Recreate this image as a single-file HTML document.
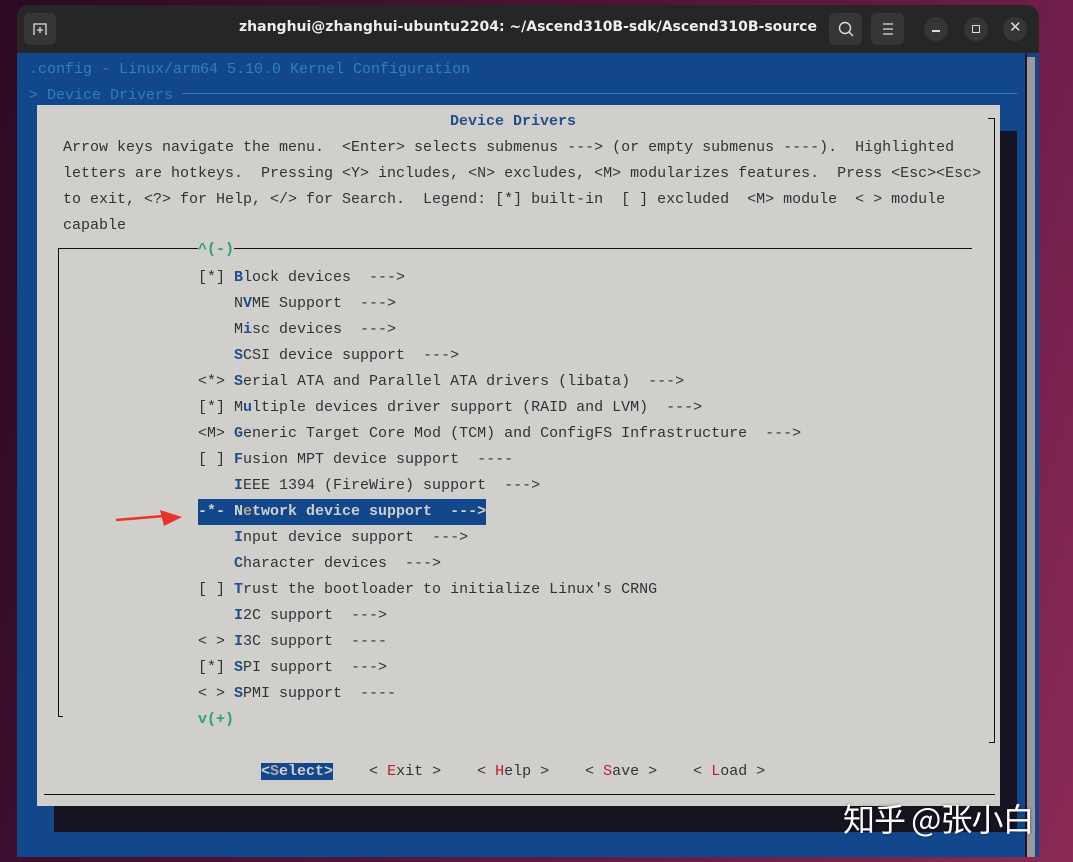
<!DOCTYPE html>
<html><head><meta charset="utf-8"><style>
*{margin:0;padding:0;box-sizing:border-box}
body{width:1073px;height:862px;overflow:hidden;position:relative;background:linear-gradient(110deg,#2c0a22 0%,#4a1236 40%,#6e1d4b 75%,#8a2a55 100%);font-family:"Liberation Mono",monospace;}
.abs{position:absolute}
.win{left:17px;top:5px;width:1022px;height:852px;background:#12488b;border-radius:12px 12px 0 0;overflow:hidden}
.tb{left:0;top:0;width:1022px;height:48px;background:#262626}
.t{position:absolute;font-size:15px;line-height:26px;white-space:pre;color:#2e3436}
.k{color:#1f4f8f;font-weight:bold}
.g{color:#2aa46a}
.r{color:#c01c28}
</style></head><body>
<div class="abs win">
 <div class="abs tb">
  <div class="abs" style="left:7px;top:8px;width:32px;height:32px;background:#363636;border-radius:6px;"></div>
  <svg class="abs" style="left:15px;top:16px" width="16" height="16" viewBox="0 0 16 16"><path d="M2 14V3h12v11" fill="none" stroke="#ddd" stroke-width="1.3"/><path d="M8 6v6M5 9h6" stroke="#ddd" stroke-width="1.3"/></svg>
  <div class="abs" style="left:0;width:1022px;top:14px;text-align:center;font-family:'DejaVu Sans','Liberation Sans',sans-serif;font-weight:bold;font-size:14px;color:#eee">zhanghui@zhanghui-ubuntu2204: ~/Ascend310B-sdk/Ascend310B-source</div>
  <div class="abs" style="left:812px;top:8px;width:33px;height:32px;background:#363636;border-radius:6px"></div>
  <svg class="abs" style="left:820px;top:15px" width="18" height="18" viewBox="0 0 18 18"><circle cx="8" cy="8" r="5.5" fill="none" stroke="#ddd" stroke-width="1.4"/><path d="M12 12l4 4" stroke="#ddd" stroke-width="1.4"/></svg>
  <div class="abs" style="left:854px;top:8px;width:33px;height:32px;background:#363636;border-radius:6px"></div>
  <svg class="abs" style="left:864px;top:17px" width="14" height="14" viewBox="0 0 14 14"><path d="M2 2h10M2 7h10M2 12h10" stroke="#ddd" stroke-width="1.3"/></svg>
  <div class="abs" style="left:907px;top:12px;width:24px;height:24px;background:#363636;border-radius:50%"></div>
  <div class="abs" style="left:915px;top:25px;width:8px;height:1.5px;background:#ddd"></div>
  <div class="abs" style="left:947px;top:12px;width:24px;height:24px;background:#363636;border-radius:50%"></div>
  <div class="abs" style="left:955px;top:20px;width:8px;height:8px;border:1.4px solid #ddd"></div>
  <div class="abs" style="left:986px;top:12px;width:24px;height:24px;background:#363636;border-radius:50%"></div>
  <div class="abs" style="left:992px;top:13px;color:#ddd;font-family:'DejaVu Sans',sans-serif;font-size:15px">✕</div>
 </div>
 <div class="abs" style="left:1010px;top:52px;width:8px;height:800px;background:#9a9a9a"></div>
 <div class="abs" style="left:1008px;top:48px;width:2px;height:804px;background:#2a1030"></div>
</div>
<div class="t" style="left:29px;top:57px;color:#2f7fc0">.config - Linux/arm64 5.10.0 Kernel Configuration</div>
<div class="t" style="left:29px;top:83px;color:#2f7fc0">&gt; Device Drivers</div>
<div class="abs" style="left:182px;top:93px;width:835px;height:1px;background:#2f7fc0"></div>
<div class="abs" style="left:54px;top:131px;width:963px;height:701px;background:#161420"></div>
<div class="abs" style="left:37px;top:105px;width:963px;height:701px;background:#d0cfcc"></div>
<div class="abs" style="left:994px;top:118px;width:1px;height:624px;background:#111"></div>
<div class="abs" style="left:988px;top:118px;width:7px;height:1px;background:#111"></div>
<div class="abs" style="left:989px;top:742px;width:6px;height:1px;background:#111"></div>
<div class="abs" style="left:44px;top:794px;width:951px;height:1px;background:#111"></div>
<div class="abs" style="left:58px;top:248px;width:914px;height:1px;background:#111"></div>
<div class="abs" style="left:58px;top:248px;width:1px;height:468px;background:#111"></div>
<div class="abs" style="left:58px;top:716px;width:5px;height:1px;background:#111"></div>
<div class="t k" style="left:450px;top:109px">Device Drivers</div>
<div class="t" style="left:63px;top:135px">Arrow keys navigate the menu.  &lt;Enter&gt; selects submenus ---&gt; (or empty submenus ----).  Highlighted
letters are hotkeys.  Pressing &lt;Y&gt; includes, &lt;N&gt; excludes, &lt;M&gt; modularizes features.  Press &lt;Esc&gt;&lt;Esc&gt;
to exit, &lt;?&gt; for Help, &lt;/&gt; for Search.  Legend: [*] built-in  [ ] excluded  &lt;M&gt; module  &lt; &gt; module
capable</div>
<div class="t g" style="left:198px;top:239px;background:#d0cfcc;font-weight:bold;line-height:22px">^(-)</div>
<div class="t" style="left:198px;top:265px">[*] <span class="k">B</span>lock devices  ---&gt;
    N<span class="k">V</span>ME Support  ---&gt;
    M<span class="k">i</span>sc devices  ---&gt;
    <span class="k">S</span>CSI device support  ---&gt;
&lt;*&gt; <span class="k">S</span>erial ATA and Parallel ATA drivers (libata)  ---&gt;
[*] M<span class="k">u</span>ltiple devices driver support (RAID and LVM)  ---&gt;
&lt;M&gt; <span class="k">G</span>eneric Target Core Mod (TCM) and ConfigFS Infrastructure  ---&gt;
[ ] <span class="k">F</span>usion MPT device support  ----
    <span class="k">I</span>EEE 1394 (FireWire) support  ---&gt;
<span style="background:#12488b;color:#d0cfcc;font-weight:bold;display:inline-block;height:26px">-*- N<span style="color:#c8a080">e</span>twork device support  ---&gt;</span>
    <span class="k">I</span>nput device support  ---&gt;
    <span class="k">C</span>haracter devices  ---&gt;
[ ] <span class="k">T</span>rust the bootloader to initialize Linux's CRNG
    <span class="k">I</span>2C support  ---&gt;
&lt; &gt; <span class="k">I</span>3C support  ----
[*] <span class="k">S</span>PI support  ---&gt;
&lt; &gt; <span class="k">S</span>PMI support  ----</div>
<div class="t g" style="left:198px;top:707px;font-weight:bold">v(+)</div>
<div class="t" style="left:261px;top:759px"><span style="background:#12488b;color:#d0cfcc;font-weight:bold">&lt;<span style="color:#aaa">S</span>elect&gt;</span>    &lt; <span class="r">E</span>xit &gt;    &lt; <span class="r">H</span>elp &gt;    &lt; <span class="r">S</span>ave &gt;    &lt; <span class="r">L</span>oad &gt;</div>
<svg class="abs" style="left:114px;top:508px" width="70" height="20" viewBox="0 0 70 20"><path d="M2 12L50 8" stroke="#e8332a" stroke-width="2.5"/><path d="M46 2L68 9L50 18Z" fill="#e8332a"/></svg>
<div class="abs" style="left:843px;top:795px;color:#fff;font-family:'Noto Sans CJK SC',sans-serif;font-size:32px;letter-spacing:-1px;white-space:nowrap;text-shadow:0 0 3px rgba(0,0,0,.5)">知乎 @张小白</div>
</body></html>
